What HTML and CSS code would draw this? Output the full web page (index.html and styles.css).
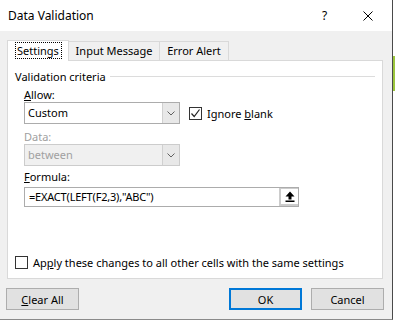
FILE: index.html
```html
<!DOCTYPE html>
<html lang="en">
<head>
    <meta charset="UTF-8">
    <title>Data Validation</title>
    <link rel="stylesheet" href="styles.css">
</head>
<body>
    <div class="screen">
        <div class="dialog">
            <div class="titlebar">
                <span class="title">Data Validation</span>
                <span class="help">?</span>
                <svg class="close" width="10" height="10" viewBox="0 0 10 10">
                    <path d="M0.5 0.5 L9.5 9.5 M9.5 0.5 L0.5 9.5" stroke="#000" stroke-width="1" fill="none"/>
                </svg>
            </div>

            <div class="dialog-body">
                <div class="tabs">
                    <div class="tab active"><span class="focus">Settings</span></div>
                    <div class="tab tab-input">Input Message</div>
                    <div class="tab tab-error">Error Alert</div>
                </div>

                <div class="panel">
                    <div class="group-head">
                        <span>Validation criteria</span>
                        <div class="rule"></div>
                    </div>

                    <div class="criteria">
                        <div class="fields">
                            <div class="field-label"><u>A</u>llow:</div>
                            <div class="select">
                                <span class="value">Custom</span>
                                <span class="drop">
                                    <svg width="8" height="5" viewBox="0 0 8 5"><path d="M0.5 0.5 L4 4 L7.5 0.5" stroke="#606060" fill="none"/></svg>
                                </span>
                            </div>
                            <div class="field-label disabled">Data:</div>
                            <div class="select disabled">
                                <span class="value">between</span>
                                <span class="drop">
                                    <svg width="8" height="5" viewBox="0 0 8 5"><path d="M0.5 0.5 L4 4 L7.5 0.5" stroke="#606060" fill="none"/></svg>
                                </span>
                            </div>
                            <div class="field-label"><u>F</u>ormula:</div>
                        </div>
                        <label class="check ignore">
                            <span class="box">
                                <svg width="11" height="11" viewBox="0 0 11 11"><path d="M1.5 5.5 L4.2 8.5 L9.5 1.5" stroke="#222" stroke-width="1.2" fill="none"/></svg>
                            </span>
                            <span>Ignore <u>b</u>lank</span>
                        </label>
                    </div>

                    <div class="formula">
                        <span class="formula-text">=EXACT(LEFT(F2,3),"ABC")</span>
                        <span class="pick">
                            <svg width="10" height="11" viewBox="0 0 10 11"><path d="M5 0.5 L9.5 5.5 L6.5 5.5 L6.5 8.5 L3.5 8.5 L3.5 5.5 L0.5 5.5 Z" fill="#000"/><rect x="0.5" y="9.5" width="9" height="1.5" fill="#000"/></svg>
                        </span>
                    </div>

                    <label class="check apply">
                        <span class="box"></span>
                        <span>Ap<u>p</u>ly these changes to all other cells with the same settings</span>
                    </label>
                </div>

                <div class="buttons">
                    <button class="btn"><u>C</u>lear All</button>
                    <div class="right-buttons">
                        <button class="btn default">OK</button>
                        <button class="btn">Cancel</button>
                    </div>
                </div>
            </div>
        </div>
        <div class="behind"></div>
    </div>
</body>
</html>
```

FILE: styles.css
```css
body {
    margin: 0;
    font-family: "Noto Sans", "Open Sans", sans-serif;
    font-size: 11px;
    color: #000;
    background: #fff;
}

.screen {
    display: flex;
    width: 395px;
    height: 321px;
    overflow: hidden;
}

.dialog {
    width: 392px;
    height: 319px;
    border-right: 1px solid #4a4a4a;
    border-bottom: 1px solid #8a8a8a;
    background: #f0f0f0;
    flex-shrink: 0;
}

.behind {
    flex: 1;
    background: linear-gradient(to bottom, #fff 0, #fff 56px, #9bc53d 56px, #9bc53d 91px, #fff 91px);
}

/* title bar */
.titlebar {
    height: 31px;
    background: #fff;
    display: flex;
    align-items: center;
    padding-left: 8px;
}

.title {
    flex: 1;
    line-height: 16px;
    font-size: 12px;
}

.help {
    width: 10px;
    margin-right: 31px;
    line-height: 16px;
    font-size: 12px;
}

.close {
    margin-right: 19px;
}

/* tabs */
.dialog-body {
    padding: 8px 8px 0 7px;
}

.tabs {
    display: flex;
    align-items: flex-end;
    height: 21px;
    position: relative;
    z-index: 1;
}

.tab {
    height: 18px;
    line-height: 18px;
    text-align: center;
    border: 1px solid #d9d9d9;
    border-bottom: none;
    border-left: none;
    background: #f0f0f0;
}

.tab-input {
    width: 90px;
}

.tab-error {
    width: 68px;
}

.tab.active {
    width: 60px;
    height: 21px;
    line-height: 20px;
    background: #fff;
    border-left: 1px solid #d9d9d9;
    margin-bottom: -1px;
    text-align: left;
    padding-left: 8px;
    box-sizing: border-box;
    width: 62px;
}

.focus {
    outline: 1px dotted #000;
    padding: 0 2px 0 1px;
}

/* panel */
.panel {
    height: 217px;
    width: 367px;
    background: #fff;
    border: 1px solid #d9d9d9;
    padding: 0 0 0 7px;
}

.group-head {
    display: flex;
    align-items: center;
    height: 16px;
    margin-top: 7px;
    margin-right: 7px;
}

.rule {
    flex: 1;
    height: 1px;
    background: #dcdcdc;
    margin-left: 4px;
}

.criteria {
    display: flex;
    padding-left: 9px;
}

.fields {
    width: 156px;
}

.field-label {
    height: 14px;
    line-height: 14px;
    margin-top: 4px;
}

.field-label.disabled {
    color: #a0a0a0;
    margin-top: 6px;
}

.select {
    display: flex;
    height: 20px;
    border: 1px solid #acacac;
    background: #fff;
}

.select .value {
    flex: 1;
    line-height: 20px;
    padding-left: 3px;
}

.select .drop {
    width: 16px;
    border-left: 1px solid #d0d0d0;
    background: #e8e8e8;
    display: flex;
    align-items: center;
    justify-content: center;
}

.select.disabled {
    background: #f0f0f0;
    border-color: #cccccc;
}

.select.disabled .value {
    color: #a0a0a0;
}

.check {
    display: flex;
    align-items: center;
    gap: 5px;
}

.ignore {
    margin-left: 9px;
    margin-top: 20px;
    height: 18px;
    align-self: flex-start;
}

.box {
    width: 11px;
    height: 11px;
    border: 1px solid #333;
    background: #fff;
    display: flex;
    align-items: center;
    justify-content: center;
}

/* formula */
.formula {
    display: flex;
    margin: 3px 0 0 9px;
    width: 273px;
    height: 18px;
    border: 1px solid #acacac;
}

.formula-text {
    flex: 1;
    line-height: 18px;
    padding-left: 4px;
    font-size: 11px;
    letter-spacing: -0.2px;
}

.pick {
    width: 17px;
    border: 2px solid #cccccc;
    border-top-width: 1px;
    border-right: none;
    background: #fff;
    display: flex;
    align-items: center;
    justify-content: center;
}

.apply {
    margin-top: 47px;
    height: 16px;
}

/* buttons */
.buttons {
    display: flex;
    justify-content: space-between;
    margin-top: 9px;
}

.right-buttons {
    display: flex;
    gap: 10px;
}

.btn {
    width: 73px;
    height: 22px;
    border: 1px solid #adadad;
    background: #e1e1e1;
    font-family: inherit;
    font-size: 11px;
    color: #000;
    padding: 0;
    margin-left: -1px;
}

.btn.default {
    border: 2px solid #0078d7;
}
```
